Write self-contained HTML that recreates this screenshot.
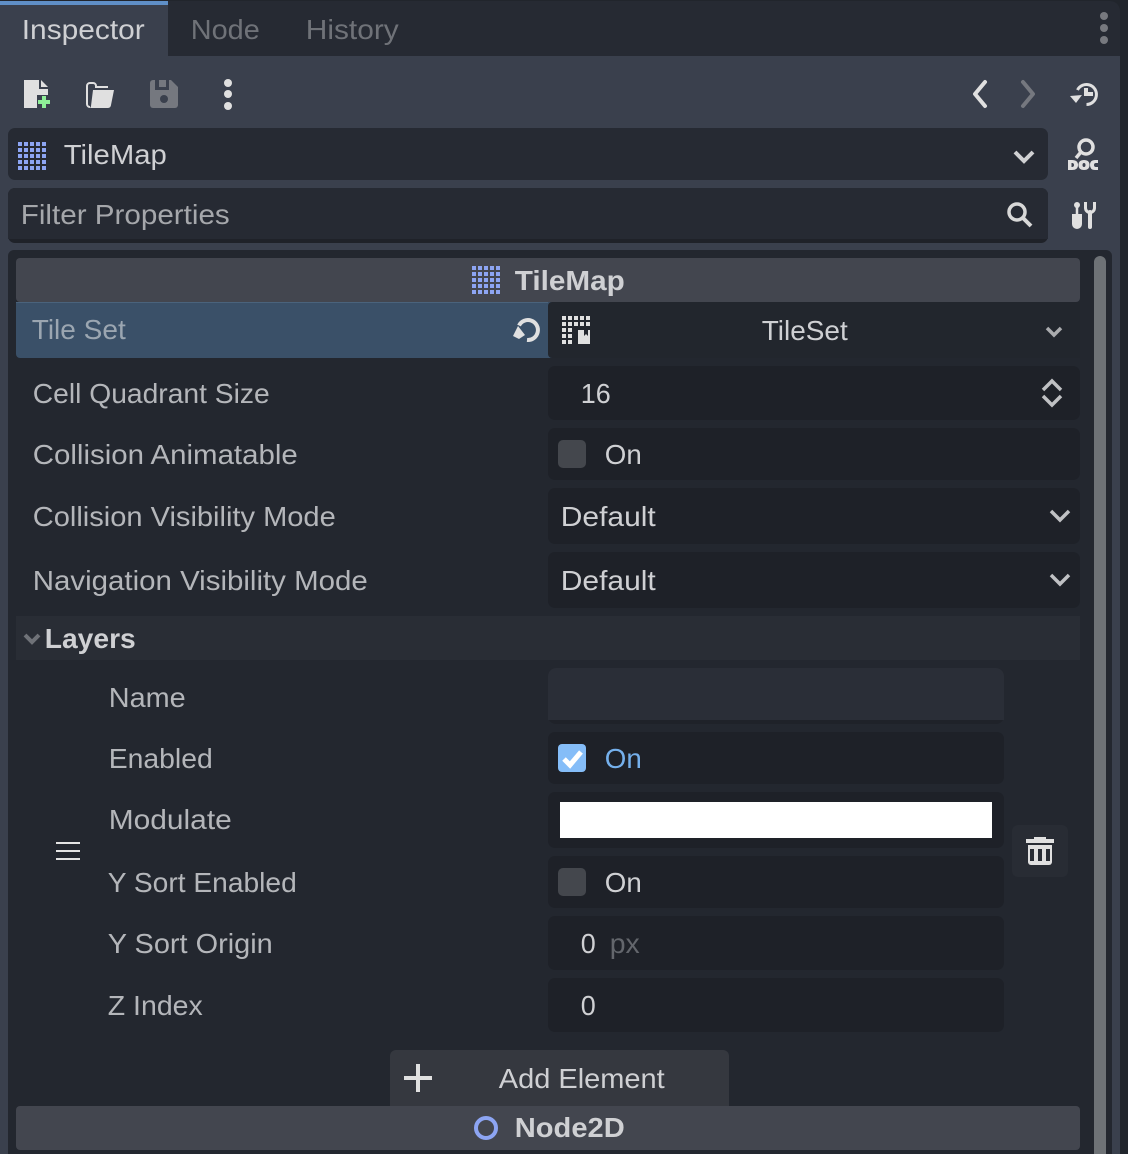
<!DOCTYPE html>
<html><head><meta charset="utf-8"><style>
html,body{margin:0;padding:0;background:#21252c;width:1128px;height:1154px;overflow:hidden}
svg{display:block}
text{font-family:"Liberation Sans",sans-serif;font-size:28px;fill:#b4b6ba;transform:translateX(-.25px)}
.h{fill:#cfd0d3;font-weight:bold}
.b{fill:#cfd0d3}
.d{fill:#6f7278}
</style></head><body>
<svg width="1128" height="1154" viewBox="0 0 1128 1154" xmlns="http://www.w3.org/2000/svg">
<defs>
<pattern id="g" x="18" y="142" width="6" height="6" patternUnits="userSpaceOnUse"><rect width="4" height="4" fill="#8da5f3"/></pattern>
<pattern id="g2" x="472" y="266" width="6" height="6" patternUnits="userSpaceOnUse"><rect width="4" height="4" fill="#8da5f3"/></pattern>
<pattern id="g3" x="562" y="316" width="6" height="6" patternUnits="userSpaceOnUse"><rect width="4" height="4" fill="#e0e0e0"/></pattern>
</defs>
<rect width="1128" height="1154" fill="#21252c"/>
<!-- main panel -->
<path d="M0 56H1120V1154H0Z" fill="#3a404d"/>
<path d="M168 1H1110a10 10 0 0 1 10 10V56H168Z" fill="#262a33"/>
<rect x="0" y="1" width="168" height="55" fill="#3a404d"/>
<rect x="0" y="1" width="168" height="4" fill="#5f8fc7"/>
<text x="22" y="39" textLength="123" lengthAdjust="spacingAndGlyphs" class="b">Inspector</text>
<text x="191" y="39" textLength="69" lengthAdjust="spacingAndGlyphs" class="d">Node</text>
<text x="306" y="39" textLength="93" lengthAdjust="spacingAndGlyphs" class="d">History</text>
<g fill="#77797f"><circle cx="1104" cy="16" r="4"/><circle cx="1104" cy="28" r="4"/><circle cx="1104" cy="40" r="4"/></g>
<!-- toolbar -->
<path d="M24 80H39V89H48V95H37V108H24Z" fill="#e0e0e0"/>
<path d="M41 80L48 87H41Z" fill="#e0e0e0"/>
<path d="M42 96h4v4h4v4h-4v4h-4v-4h-4v-4h4z" fill="#8eef97"/>
<path d="M90 107a3 3 0 0 1-3-3V86a3 3 0 0 1 3-3h3a3 3 0 0 1 3 3v1h12" fill="none" stroke="#e0e0e0" stroke-width="2"/>
<path d="M93 90H114L111 105a3 3 0 0 1-3 3H90a3 3 0 0 0 1-2Z" fill="#e0e0e0"/>
<path d="M153 80H171L178 87V105a3 3 0 0 1-3 3H153a3 3 0 0 1-3-3V83a3 3 0 0 1 3-3Z" fill="#75787f"/>
<rect x="155" y="80" width="4" height="10" fill="#3a404d"/><rect x="166" y="80" width="3" height="10" fill="#3a404d"/><rect x="155" y="87" width="14" height="3" fill="#3a404d"/>
<rect x="159" y="80" width="7" height="7" fill="#75787f"/>
<circle cx="164" cy="99" r="4" fill="#3a404d"/>
<g fill="#e0e0e0"><circle cx="228" cy="83" r="4"/><circle cx="228" cy="94" r="4"/><circle cx="228" cy="106" r="4"/></g>
<path d="M985 82L975 94L985 106" fill="none" stroke="#e0e0e0" stroke-width="4" stroke-linecap="round" stroke-linejoin="round"/>
<path d="M1023 82L1033 94L1023 106" fill="none" stroke="#75787f" stroke-width="4" stroke-linecap="round" stroke-linejoin="round"/>
<path d="M1077.500 90A10 10 0 1 1 1086.500 104.500" fill="none" stroke="#e0e0e0" stroke-width="3"/>
<path d="M1070 96L1082 95L1076 103Z" fill="#e0e0e0"/>
<path d="M1084 88H1088V92H1093V96H1084Z" fill="#e0e0e0"/>
<!-- object field -->
<rect x="8" y="128" width="1040" height="52" rx="7" fill="#262a33"/>
<rect x="18" y="142" width="28" height="28" fill="url(#g)"/>
<text x="64" y="164" textLength="103" lengthAdjust="spacingAndGlyphs" class="b">TileMap</text>
<path d="M1015 152L1024 161L1033 152" fill="none" stroke="#d0d1d3" stroke-width="4"/>
<circle cx="1086" cy="147" r="7" fill="none" stroke="#e0e0e0" stroke-width="3.500"/>
<path d="M1081 152L1076 158" stroke="#e0e0e0" stroke-width="3.500"/>
<path d="M1068 160h4q6 0 6 5t-6 5h-4ZM1071.500 163v4h.5q2 0 2-2t-2-2Z" fill="#e0e0e0" fill-rule="evenodd"/>
<path d="M1084 160q5.500 0 5.500 5t-5.500 5t-5.500-5t5.500-5ZM1084 163q-1.500 0-1.500 2t1.500 2t1.500-2t-1.500-2Z" fill="#e0e0e0" fill-rule="evenodd"/>
<path d="M1098 160v3h-2q-2 0-2 2t2 2h2v3h-3q-5 0-5-5t5-5Z" fill="#e0e0e0"/>
<!-- filter -->
<rect x="8" y="188" width="1040" height="55" rx="7" fill="#1f2229"/>
<path d="M15 188H1041a7 7 0 0 1 7 7V239H8V195a7 7 0 0 1 7-7Z" fill="#262a33"/>
<text x="21" y="224" textLength="209" lengthAdjust="spacingAndGlyphs" style="fill:#a5a7ab">Filter Properties</text>
<circle cx="1017" cy="212" r="8" fill="none" stroke="#d8d8d8" stroke-width="3.500"/>
<path d="M1023 218L1031 226" stroke="#d8d8d8" stroke-width="4"/>
<circle cx="1077" cy="205" r="3" fill="#e0e0e0"/>
<path d="M1077 205V216" stroke="#e0e0e0" stroke-width="2.500"/>
<path d="M1072 214H1082V224a5 5 0 0 1-10 0Z" fill="#e0e0e0"/>
<path d="M1085.500 202V208a4.500 4.500 0 0 0 9 0V202" fill="none" stroke="#e0e0e0" stroke-width="3"/>
<path d="M1090 212V227" stroke="#e0e0e0" stroke-width="4" stroke-linecap="round"/>
<!-- inspector body -->
<path d="M14 250H1106a6 6 0 0 1 6 6V1154H8V256a6 6 0 0 1 6-6Z" fill="#23272f"/>
<path d="M1094 262a6 6 0 0 1 12 0V1154H1094Z" fill="#6e7276"/>
<!-- section header -->
<rect x="16" y="258" width="1064" height="44" rx="4" fill="#43464f"/>
<rect x="472" y="266" width="28" height="28" fill="url(#g2)"/>
<text x="515" y="290" textLength="110" lengthAdjust="spacingAndGlyphs" class="h">TileMap</text>
<!-- Tile Set -->
<path d="M16 302H552V358H20a4 4 0 0 1-4-4Z" fill="#3a5068"/>
<rect x="16" y="302" width="532" height="1" fill="#4a637c"/>
<text x="32" y="339" textLength="94" lengthAdjust="spacingAndGlyphs" style="fill:#9ba6b1">Tile Set</text>
<path d="M519 325.500A10 10 0 1 1 527 340" fill="none" stroke="#e0e0e0" stroke-width="4"/>
<path d="M513 336L518 326L525 335L519 339Z" fill="#e0e0e0"/>
<path d="M552 302H1080V358H552a4 4 0 0 1-4-4V306a4 4 0 0 1 4-4Z" fill="#22262d"/>
<rect x="562" y="316" width="28" height="28" fill="url(#g3)"/>
<rect x="574" y="328" width="16" height="16" fill="#22262d"/>
<path d="M578 330H584V336L586 334L588 336V330H590V344H578Z" fill="#e0e0e0"/>
<text x="762" y="340" textLength="86" lengthAdjust="spacingAndGlyphs" class="b">TileSet</text>
<path d="M1047 328L1054 335L1061 328" fill="none" stroke="#aaabae" stroke-width="3.500"/>
<!-- fields -->
<g fill="#1e2128">
<rect x="548" y="366" width="532" height="54" rx="7"/>
<rect x="548" y="428" width="532" height="52" rx="7"/>
<rect x="548" y="488" width="532" height="56" rx="7"/>
<rect x="548" y="552" width="532" height="56" rx="7"/>
<rect x="548" y="732" width="456" height="52" rx="7"/>
<rect x="548" y="792" width="456" height="56" rx="7"/>
<rect x="548" y="856" width="456" height="52" rx="7"/>
<rect x="548" y="916" width="456" height="54" rx="7"/>
<rect x="548" y="978" width="456" height="54" rx="7"/>
</g>
<rect x="548" y="668" width="456" height="56" rx="8" fill="#1f2229"/>
<path d="M556 668H996a8 8 0 0 1 8 8V720H548V676a8 8 0 0 1 8-8Z" fill="#2a2e37"/>
<text x="33" y="403" textLength="237" lengthAdjust="spacingAndGlyphs">Cell Quadrant Size</text>
<text x="581" y="403" textLength="30" lengthAdjust="spacingAndGlyphs" class="b">16</text>
<path d="M1043 390L1052 381L1061 390" fill="none" stroke="#c0c1c4" stroke-width="3.500"/>
<path d="M1043 396L1052 405L1061 396" fill="none" stroke="#c0c1c4" stroke-width="3.500"/>
<text x="33" y="464" textLength="265" lengthAdjust="spacingAndGlyphs">Collision Animatable</text>
<rect x="558" y="440" width="28" height="28" rx="5" fill="#44474d"/>
<text x="605" y="464" textLength="37" lengthAdjust="spacingAndGlyphs" class="b">On</text>
<text x="33" y="526" textLength="303" lengthAdjust="spacingAndGlyphs">Collision Visibility Mode</text>
<text x="561" y="526" textLength="95" lengthAdjust="spacingAndGlyphs" class="b">Default</text>
<path d="M1051 511L1060 520L1069 511" fill="none" stroke="#c0c1c4" stroke-width="3.500"/>
<text x="33" y="590" textLength="335" lengthAdjust="spacingAndGlyphs">Navigation Visibility Mode</text>
<text x="561" y="590" textLength="95" lengthAdjust="spacingAndGlyphs" class="b">Default</text>
<path d="M1051 575L1060 584L1069 575" fill="none" stroke="#c0c1c4" stroke-width="3.500"/>
<!-- layers -->
<rect x="16" y="616" width="1064" height="44" fill="#292d35"/>
<path d="M25 635L32 642L39 635" fill="none" stroke="#6f7278" stroke-width="4"/>
<text x="45" y="648" textLength="91" lengthAdjust="spacingAndGlyphs" class="h">Layers</text>
<text x="109" y="707" textLength="77" lengthAdjust="spacingAndGlyphs">Name</text>
<text x="109" y="768" textLength="104" lengthAdjust="spacingAndGlyphs">Enabled</text>
<rect x="558" y="744" width="28" height="28" rx="4" fill="#85bdf8"/>
<path d="M564 759L570 765L581 752" fill="none" stroke="#fff" stroke-width="5"/>
<text x="605" y="768" textLength="37" lengthAdjust="spacingAndGlyphs" style="fill:#75b0ec">On</text>
<text x="109" y="829" textLength="123" lengthAdjust="spacingAndGlyphs">Modulate</text>
<rect x="560" y="802" width="432" height="36" fill="#fff"/>
<g fill="#e4e4e4"><rect x="56" y="842" width="24" height="2"/><rect x="56" y="850" width="24" height="2"/><rect x="56" y="858" width="24" height="2"/></g>
<text x="108" y="892" textLength="189" lengthAdjust="spacingAndGlyphs">Y Sort Enabled</text>
<rect x="558" y="868" width="28" height="28" rx="5" fill="#44474d"/>
<text x="605" y="892" textLength="37" lengthAdjust="spacingAndGlyphs" class="b">On</text>
<text x="108" y="953" textLength="165" lengthAdjust="spacingAndGlyphs">Y Sort Origin</text>
<text x="581" y="953" textLength="15" lengthAdjust="spacingAndGlyphs" class="b">0</text>
<text x="610" y="953" textLength="30" lengthAdjust="spacingAndGlyphs" style="fill:#63666c">px</text>
<text x="108" y="1015" textLength="95" lengthAdjust="spacingAndGlyphs">Z Index</text>
<text x="581" y="1015" textLength="15" lengthAdjust="spacingAndGlyphs" class="b">0</text>
<!-- trash -->
<rect x="1012" y="825" width="56" height="52" rx="6" fill="#282c34"/>
<rect x="1034" y="837" width="12" height="3" fill="#e0e0e0"/><rect x="1026" y="839" width="28" height="4" fill="#e0e0e0"/>
<path d="M1028 845H1052V862a3 3 0 0 1-3 3H1031a3 3 0 0 1-3-3Z" fill="#e0e0e0"/>
<g fill="#282c34"><rect x="1030" y="849" width="4" height="12"/><rect x="1038" y="849" width="4" height="12"/><rect x="1046" y="849" width="4" height="12"/></g>
<!-- add -->
<path d="M396 1050H723a6 6 0 0 1 6 6V1106H390V1056a6 6 0 0 1 6-6Z" fill="#35383f"/>
<path d="M418 1064V1092M404 1078H432" stroke="#e0e0e0" stroke-width="4"/>
<text x="499" y="1088" textLength="166" lengthAdjust="spacingAndGlyphs" class="b">Add Element</text>
<!-- node2d -->
<rect x="16" y="1106" width="1064" height="44" rx="4" fill="#43464f"/>
<circle cx="486" cy="1128" r="10" fill="none" stroke="#8da5f3" stroke-width="4"/>
<text x="515" y="1137" textLength="110" lengthAdjust="spacingAndGlyphs" class="h">Node2D</text>
</svg>
</body></html>
